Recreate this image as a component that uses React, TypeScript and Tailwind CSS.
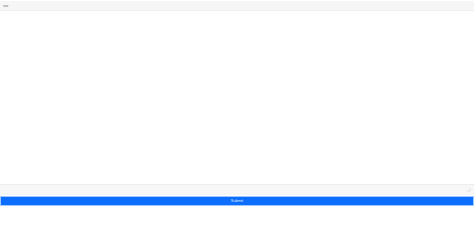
export default function App() {
  return (
    <div className="flex h-[222px] w-[474px] flex-col bg-white font-['Liberation_Sans',sans-serif]">
      <div className="mt-px flex h-[10px] items-center border-b border-[#f0f0f0] bg-[#f6f6f6] px-[3px]">
        <span className="text-[4px] leading-none text-[#666]">ssr</span>
      </div>

      <div className="flex-1" />

      <div className="relative h-[11px] border-t border-[#ededed] bg-[#f7f7f7]">
        <svg
          className="absolute right-[3px] top-[3px]"
          width="4"
          height="4"
          viewBox="0 0 4 4"
        >
          <path d="M4 0 L0 4 M4 2 L2 4" stroke="#c4c4c4" strokeWidth="0.5" />
        </svg>
      </div>

      <button className="mt-px mb-[16px] flex h-[10px] w-full items-center justify-center border border-[#9cc8ff] bg-[#0d6efd] text-[4px] leading-none text-[#dbe9ff]">
        Submit
      </button>
    </div>
  );
}
